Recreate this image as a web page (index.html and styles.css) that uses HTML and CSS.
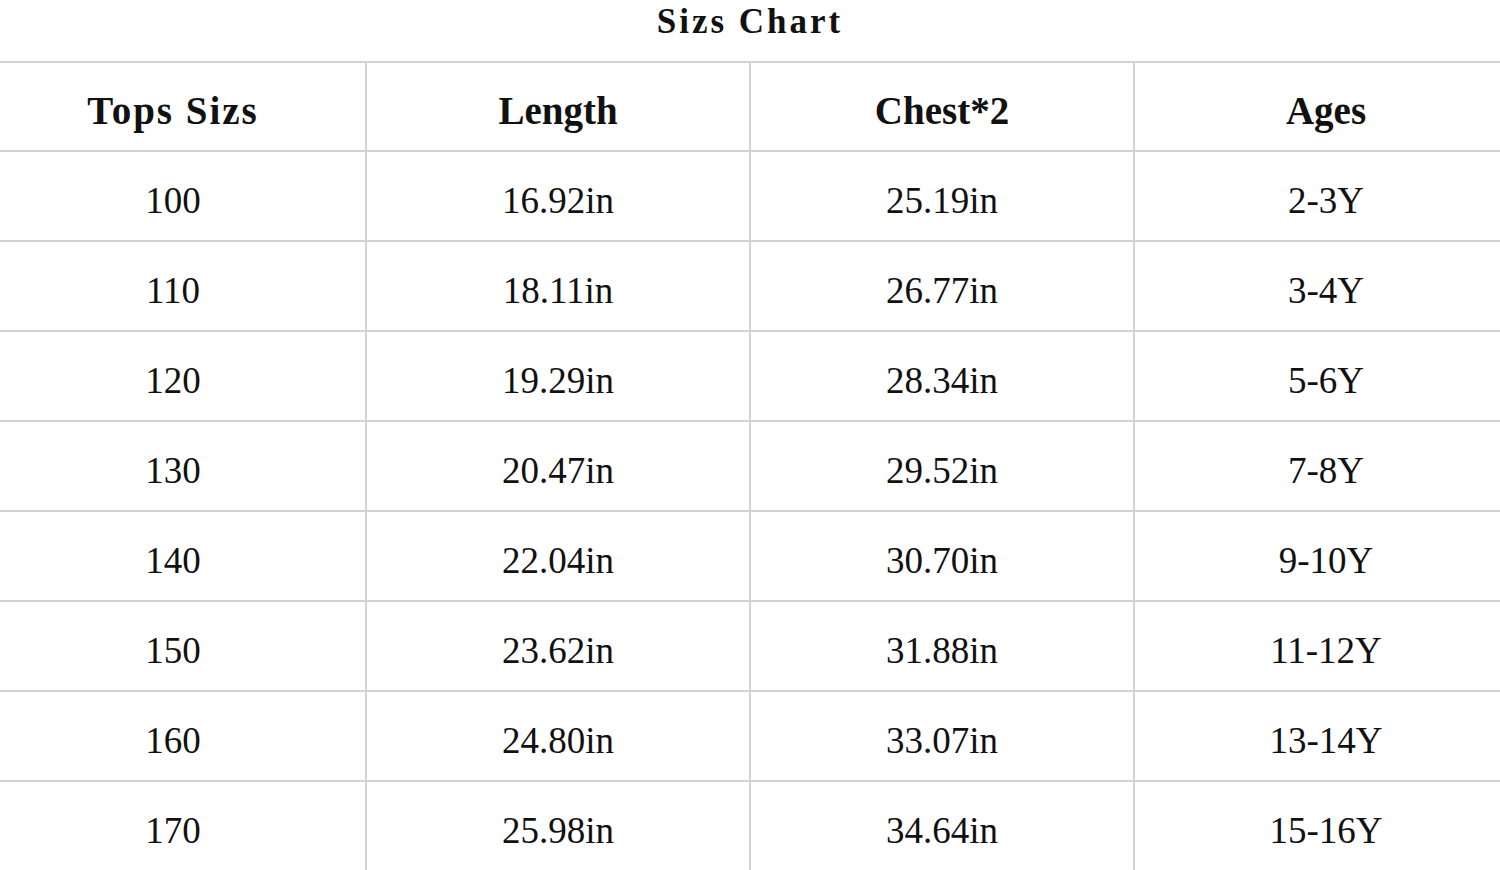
FILE: index.html
```html
<!DOCTYPE html>
<html>
<head>
<meta charset="utf-8">
<link rel="stylesheet" href="styles.css">
</head>
<body>
<div class="page">
  <h1 class="title">Sizs Chart</h1>
  <div class="chart">
    <div class="row head">
      <div class="cell">Tops Sizs</div><div class="cell">Length</div><div class="cell">Chest*2</div><div class="cell">Ages</div>
    </div>
    <div class="row"><div class="cell">100</div><div class="cell">16.92in</div><div class="cell">25.19in</div><div class="cell">2-3Y</div></div>
    <div class="row"><div class="cell">110</div><div class="cell">18.11in</div><div class="cell">26.77in</div><div class="cell">3-4Y</div></div>
    <div class="row"><div class="cell">120</div><div class="cell">19.29in</div><div class="cell">28.34in</div><div class="cell">5-6Y</div></div>
    <div class="row"><div class="cell">130</div><div class="cell">20.47in</div><div class="cell">29.52in</div><div class="cell">7-8Y</div></div>
    <div class="row"><div class="cell">140</div><div class="cell">22.04in</div><div class="cell">30.70in</div><div class="cell">9-10Y</div></div>
    <div class="row"><div class="cell">150</div><div class="cell">23.62in</div><div class="cell">31.88in</div><div class="cell">11-12Y</div></div>
    <div class="row"><div class="cell">160</div><div class="cell">24.80in</div><div class="cell">33.07in</div><div class="cell">13-14Y</div></div>
    <div class="row"><div class="cell">170</div><div class="cell">25.98in</div><div class="cell">34.64in</div><div class="cell">15-16Y</div></div>
  </div>
</div>
</body>
</html>
```
FILE: styles.css
```css
html, body {
  margin: 0;
  padding: 0;
  background: #ffffff;
}
body {
  width: 1500px;
  height: 870px;
  overflow: hidden;
  font-family: "Liberation Serif", "Times New Roman", serif;
  color: #111111;
}
.page {
  width: 1500px;
  overflow: hidden;
}
.title {
  margin: 0;
  height: 61px;
  box-sizing: border-box;
  padding-top: 2px;
  text-align: center;
  font-size: 35px;
  line-height: 40px;
  font-weight: bold;
  letter-spacing: 3px;
}
.chart {
  width: 1536px;
  margin-left: -19px;
}
.row {
  display: grid;
  grid-template-columns: repeat(4, 384px);
  border-top: 2px solid #d2d2d2;
  height: 90px;
  box-sizing: border-box;
}
.row.head {
  height: 89px;
}
.cell {
  text-align: center;
  font-size: 37px;
  line-height: 44px;
  padding-top: 27px;
}
.cell + .cell {
  border-left: 2px solid #d2d2d2;
}
.head .cell {
  font-size: 39px;
  font-weight: bold;
  padding-top: 26px;
}
.head .cell:first-child {
  letter-spacing: 2px;
}
```
